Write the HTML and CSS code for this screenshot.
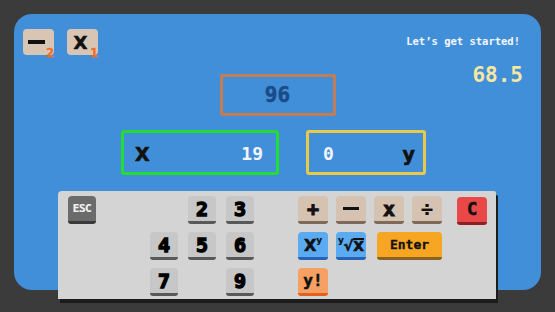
FILE: index.html
```html
<!DOCTYPE html>
<html lang="en">
<head>
    <meta charset="UTF-8">
    <meta name="viewport" content="width=device-width, initial-scale=1.0">
    <title>Calculator Game</title>
    <link rel="stylesheet" href="styles.css">
</head>
<body>

    <div class="screen">
        <!-- top bar: operation badges + status -->
        <div class="top-bar">
            <div class="badges">
                <div class="badge">
                    <span class="bar"></span>
                    <span class="badge-count">2</span>
                </div>
                <div class="badge">
                    <span class="badge-x">X</span>
                    <span class="badge-count">1</span>
                </div>
            </div>
            <div class="message">Let’s get started!</div>
        </div>

        <div class="target-row">
            <div></div>
            <div class="target-box">96</div>
            <div class="score">68.5</div>
        </div>

        <div class="vars-row">
            <div class="var-box var-x">
                <span class="var-name">X</span>
                <span class="var-value">19</span>
            </div>
            <div class="var-box var-y">
                <span class="var-value">0</span>
                <span class="var-name">y</span>
            </div>
        </div>

        <!-- keypad -->
        <div class="keypad">
            <div class="key key-esc">ESC</div>

            <div class="numbers">
                <div class="slot"></div>
                <div class="key key-num">2</div>
                <div class="key key-num">3</div>
                <div class="key key-num">4</div>
                <div class="key key-num">5</div>
                <div class="key key-num">6</div>
                <div class="key key-num">7</div>
                <div class="slot"></div>
                <div class="key key-num">9</div>
            </div>

            <div class="operators">
                <div class="key key-op">+</div>
                <div class="key key-op"><span class="minus"></span></div>
                <div class="key key-op">x</div>
                <div class="key key-op key-div">÷</div>
                <div class="key key-blue"><span>X<sup>y</sup></span></div>
                <div class="key key-blue key-root"><span><sup>y</sup>√<span class="radicand">X</span></span></div>
                <div class="key key-enter">Enter</div>
                <div class="key key-fact">y!</div>
            </div>

            <div class="key key-clear">C</div>
        </div>
    </div>

</body>
</html>
```

FILE: styles.css
```css
body {
    margin: 0;
    width: 555px;
    height: 312px;
    overflow: hidden;
    background-color: #3b3b3b;
    font-family: 'DejaVu Sans Mono', monospace;
    font-weight: bold;
}

.screen {
    margin: 14px 14px 0 14px;
    height: 276px;
    background-color: #428fd9;
    border-radius: 18px;
}

/* top bar */
.top-bar {
    display: flex;
    justify-content: space-between;
    align-items: flex-start;
    height: 52px;
    box-sizing: border-box;
    padding: 15px 21px 0 9px;
}

.badges {
    display: flex;
    gap: 13px;
}

.badge {
    position: relative;
    width: 31px;
    height: 26px;
    background-color: #d8c5b4;
    border-radius: 4px;
    display: flex;
    align-items: center;
    justify-content: center;
}

.bar {
    display: block;
    width: 17px;
    height: 4px;
    background-color: #111;
    margin-left: -4px;
}

.badge-x {
    font-family: 'DejaVu Sans', sans-serif;
    font-size: 18px;
    color: #111;
    margin-left: -4px;
    -webkit-text-stroke: 0.6px #111;
}

.badge-count {
    position: absolute;
    right: 0;
    bottom: -4px;
    font-size: 13px;
    line-height: 13px;
    color: #f26a1b;
    -webkit-text-stroke: 0.4px #f26a1b;
}

.message {
    margin-top: 6px;
    font-size: 10.5px;
    line-height: 12px;
    color: #f4f6ff;
}

/* target + score */
.target-row {
    display: grid;
    grid-template-columns: 1fr auto 1fr;
    align-items: start;
}

.target-box {
    margin-top: 8px;
    width: 116px;
    height: 42px;
    box-sizing: border-box;
    border: 3px solid #c27d55;
    border-radius: 2px;
    display: flex;
    align-items: center;
    justify-content: center;
    font-size: 21px;
    color: #194b86;
    -webkit-text-stroke: 0.5px #194b86;
}

.score {
    justify-self: end;
    margin-right: 18px;
    font-size: 21px;
    line-height: 18px;
    color: #f6e7a2;
}

/* variable boxes */
.vars-row {
    display: flex;
    gap: 27px;
    margin: 14px 0 0 107px;
}

.var-box {
    height: 45px;
    box-sizing: border-box;
    border-radius: 3px;
    display: flex;
    align-items: center;
    justify-content: space-between;
    font-size: 18px;
}

.var-x {
    width: 158px;
    border: 3px solid #24dc34;
    padding: 2px 13px 0 11px;
}

.var-y {
    width: 120px;
    border: 3px solid #e8c94a;
    padding: 2px 8px 0 14px;
}

.var-name {
    font-family: 'DejaVu Sans', sans-serif;
    font-size: 19px;
    color: #111;
    -webkit-text-stroke: 0.6px #111;
}

.var-value {
    color: #f2f5ff;
}

/* keypad */
.keypad {
    margin: 16px 0 0 44px;
    width: 438px;
    height: 108px;
    box-sizing: border-box;
    padding: 5px 0 0 10px;
    background-color: #d4d4d4;
    border-radius: 4px 2px 0 0;
    box-shadow: 2px 4px 0 #1c1c1c;
    display: flex;
    align-items: flex-start;
}

.key {
    width: 28px;
    height: 28px;
    box-sizing: border-box;
    border-radius: 4px 4px 3px 3px;
    display: flex;
    align-items: center;
    justify-content: center;
    color: #111;
    font-size: 18px;
    line-height: 1;
    -webkit-text-stroke: 0.8px #111;
}

.key-esc {
    background-color: #6b6b6b;
    border-bottom: 3px solid #3a3a3a;
    color: #f2f2f2;
    font-size: 11px;
    letter-spacing: -0.5px;
    -webkit-text-stroke: 0.2px #f2f2f2;
}

.numbers {
    display: grid;
    grid-template-columns: repeat(3, 28px);
    grid-auto-rows: 28px;
    gap: 8px 10px;
    margin-left: 54px;
}

.key-num {
    background-color: #c7c7c7;
    border-bottom: 3px solid #595959;
    font-size: 20px;
    color: #000;
    -webkit-text-stroke: 1.4px #000;
}

.operators {
    display: grid;
    grid-template-columns: repeat(4, 30px);
    grid-auto-rows: 28px;
    gap: 8px 8px;
    margin-left: 44px;
}

.operators .key {
    width: 30px;
}

.key-op {
    background-color: #d6c2b0;
    border-bottom: 3px solid #7d6a58;
    font-size: 20px;
    -webkit-text-stroke: 1px #111;
}

.key-div {
    -webkit-text-stroke: 0.2px #111;
}

.minus {
    display: block;
    width: 16px;
    height: 3px;
    background-color: #111;
}

.key-blue {
    background-color: #5aabf1;
    border-bottom: 3px solid #2763b4;
    font-family: 'DejaVu Sans', sans-serif;
    font-size: 16px;
    -webkit-text-stroke: 0.6px #111;
}

.key-blue sup {
    font-size: 9px;
    vertical-align: 8px;
    -webkit-text-stroke: 0.2px #111;
}

.key-root {
    font-size: 14px;
}

.radicand {
    border-top: 2px solid #111;
    line-height: 13px;
    display: inline-block;
}

.key-enter {
    grid-column: span 2;
    width: auto !important;
    margin-left: 3px;
    background-color: #f6a623;
    border-bottom: 3px solid #8c6222;
    font-size: 13px;
    -webkit-text-stroke: 0.3px #111;
}

.key-fact {
    grid-column: 1;
    background-color: #f7a063;
    border-bottom: 3px solid #e0621c;
    font-size: 16px;
    -webkit-text-stroke: 0.6px #111;
}

.key-clear {
    margin: 1px 0 0 15px;
    width: 30px;
    background-color: #e84848;
    border-bottom: 3px solid #8e2222;
    font-size: 17px;
    -webkit-text-stroke: 0.6px #111;
}
```
